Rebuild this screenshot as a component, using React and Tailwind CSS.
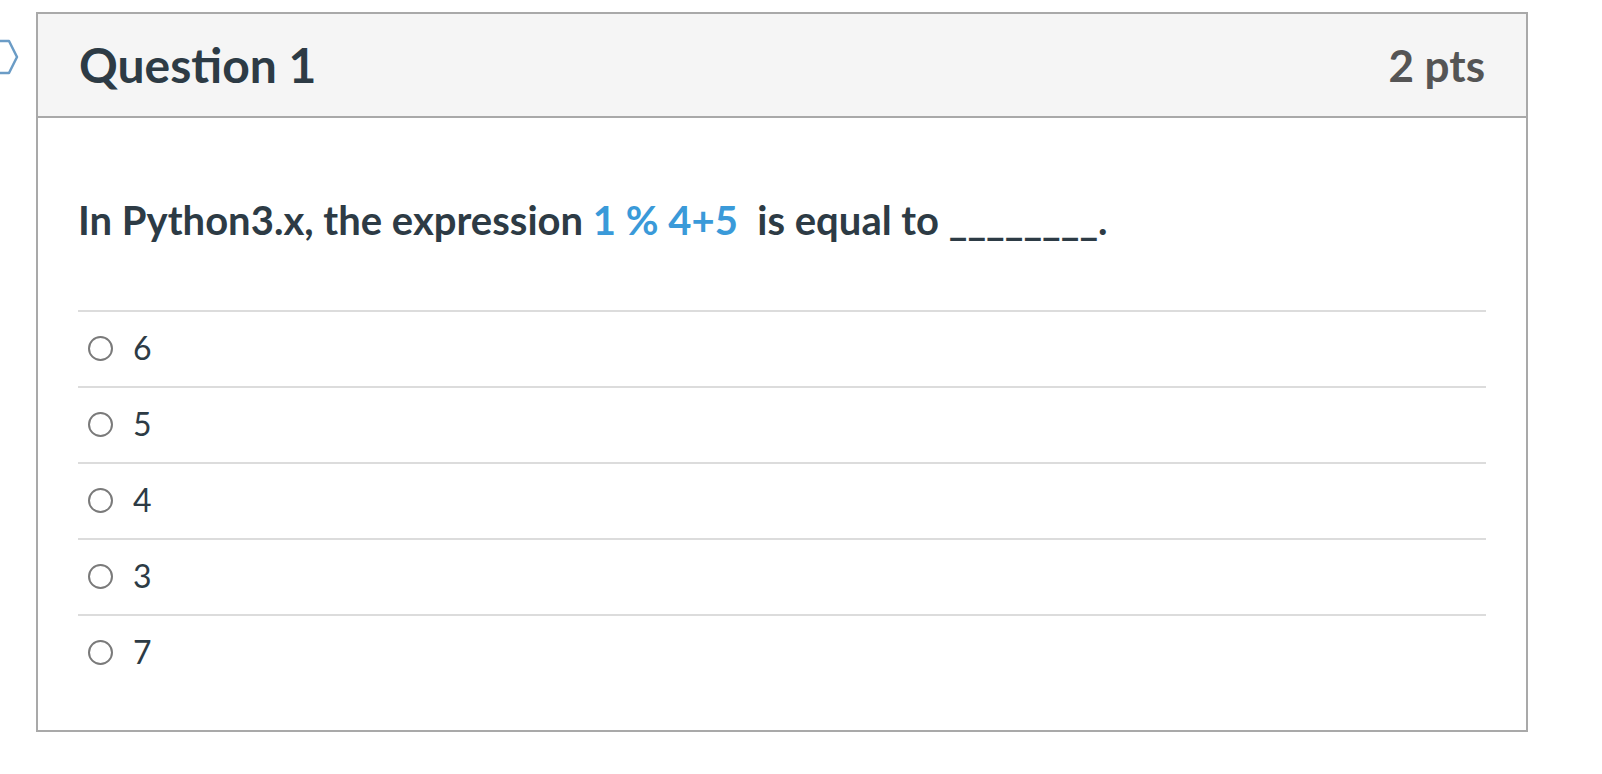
import React from 'react';

const answers = ['6', '5', '4', '3', '7'];

// Canvas-style flag marker peeking in from the left edge
const FlagMarker = () => (
    <svg width="20" height="36" viewBox="0 0 20 36" className="absolute left-0 top-[39px]">
        <path d="M-10 2 H9 L17 18 L9 34 H-10" fill="none" stroke="#6b9cc6" strokeWidth="2.5" strokeLinejoin="round" />
    </svg>
);

const AnswerRow = ({ label }) => (
    <div className="flex items-center h-[76px] border-t-2 border-[#dcdcdc] pl-[10px] pb-[2px]">
        <span className="w-[25px] h-[25px] rounded-full border-2 border-[#7a7a7a] bg-white shrink-0" />
        <span className="ml-[20px] text-[32px] text-[#2d3b45] leading-none">{label}</span>
    </div>
);

export default function App() {
    return (
        <div
            className="relative min-h-screen bg-white pl-[36px] pt-[12px]"
            style={{ fontFamily: 'Lato, "Open Sans", sans-serif' }}
        >
            <FlagMarker />
            <div className="w-[1492px] h-[720px] border-2 border-[#a9a9a9] flex flex-col">
                {/* Header */}
                <div className="h-[104px] bg-[#f5f5f5] border-b-2 border-[#a9a9a9] flex items-center justify-between px-[41px]">
                    <h2 className="text-[48px] font-bold text-[#2d3b45] leading-none">Question 1</h2>
                    <span className="text-[44px] font-bold text-[#555555] leading-none">2 pts</span>
                </div>

                {/* Body */}
                <div className="flex-1 px-[40px] pt-[75px]">
                    <p className="text-[40px] font-bold text-[#2d3b45] leading-[54px] whitespace-pre">
                        In Python3.x, the expression <span className="text-[#3a9ad9]">1 % 4+5</span>{'  '}is equal to ________.
                    </p>
                    <div className="mt-[63px]">
                        {answers.map((a) => (
                            <AnswerRow key={a} label={a} />
                        ))}
                    </div>
                </div>
            </div>
        </div>
    );
}
